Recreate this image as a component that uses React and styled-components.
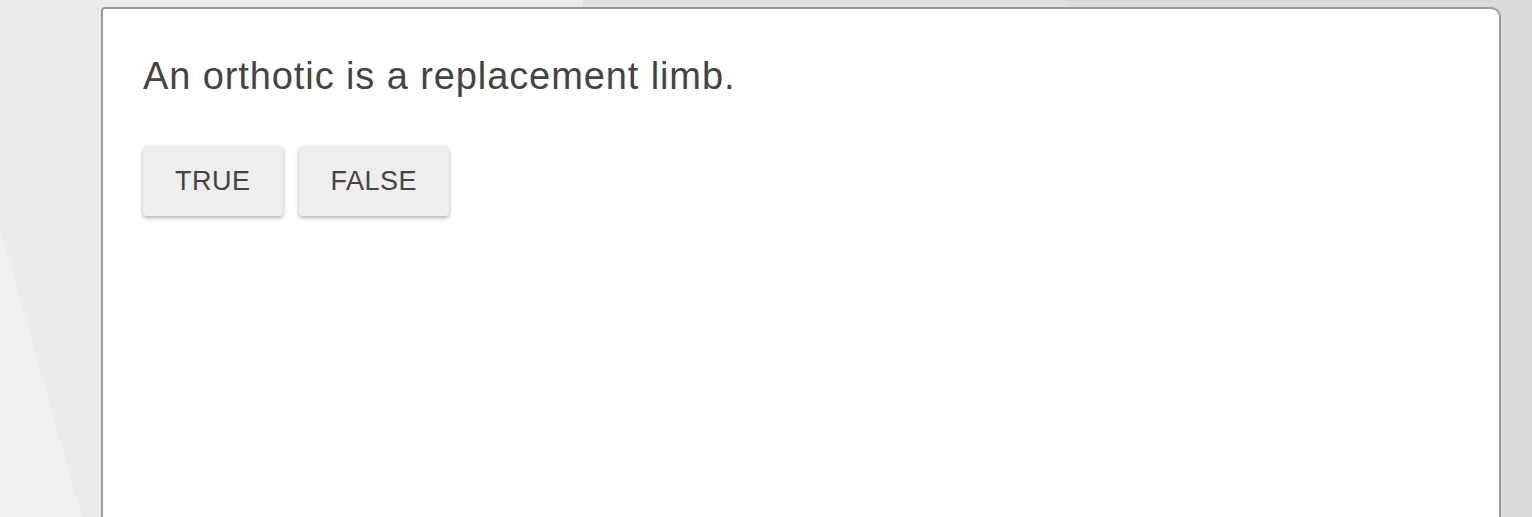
import React from 'react';
import styled, { createGlobalStyle } from 'styled-components';

const GlobalStyle = createGlobalStyle`
    html, body {
        margin: 0;
        padding: 0;
        height: 100%;
        overflow: hidden;
        background: #dadada;
        font-family: "Liberation Sans", Arial, Helvetica, sans-serif;
    }
`;

const Page = styled.div`
    position: relative;
    width: 1532px;
    height: 517px;
    overflow: hidden;
    padding: 7px 0 0 101px;
    box-sizing: border-box;
`;

const Backdrop = styled.svg`
    position: absolute;
    inset: 0;
    width: 100%;
    height: 100%;
    z-index: 0;
`;

const Card = styled.section`
    position: relative;
    z-index: 1;
    width: 1400px;
    height: 600px;
    box-sizing: border-box;
    background: #ffffff;
    border: 2px solid #999999;
    border-radius: 4px 10px 0 0;
    padding: 44px 40px;
`;

const Question = styled.h2`
    margin: 0 0 47px;
    font-size: 38px;
    line-height: 46px;
    font-weight: 400;
    letter-spacing: 0.9px;
    color: #444444;
`;

const Answers = styled.div`
    display: flex;
    gap: 16px;
`;

const AnswerButton = styled.button`
    height: 70px;
    padding: 0 32px;
    border: none;
    border-radius: 4px;
    background: #eeeeee;
    color: #444444;
    font-family: inherit;
    font-size: 27px;
    letter-spacing: 0.5px;
    box-shadow: 0 2px 4px rgba(0, 0, 0, 0.3);
    cursor: pointer;

    &:hover {
        background: #e4e4e4;
    }
`;

const App = () => {
    const answers = ['TRUE', 'FALSE'];

    return (
        <>
            <GlobalStyle />
            <Page>
                <Backdrop viewBox="0 0 1532 517" preserveAspectRatio="none">
                    <rect width="1532" height="517" fill="#dadada" />
                    <polygon points="0,0 1066,0 1100,60 0,517" fill="#e0e0e0" />
                    <polygon points="0,0 583,0 520,517 0,517" fill="#ebebeb" />
                    <polygon points="0,228 82,517 0,517" fill="#f0f0f0" />
                </Backdrop>
                <Card>
                    <Question>An orthotic is a replacement limb.</Question>
                    <Answers>
                        {answers.map((a) => (
                            <AnswerButton key={a}>{a}</AnswerButton>
                        ))}
                    </Answers>
                </Card>
            </Page>
        </>
    );
};

export default App;
